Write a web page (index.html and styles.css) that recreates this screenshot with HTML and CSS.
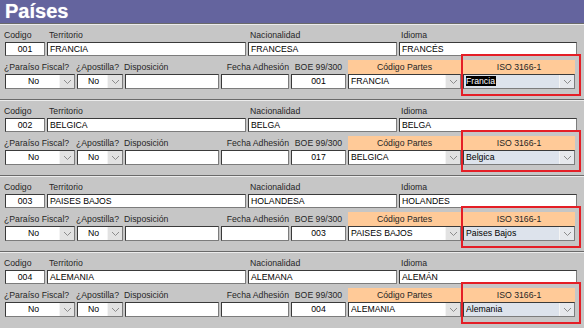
FILE: index.html
```html
<!DOCTYPE html>
<html lang="es">
  <head>
    <meta charset="UTF-8" />
    <meta name="viewport" content="width=device-width, initial-scale=1.0" />
    <title>Países</title>
    <link rel="stylesheet" href="styles.css">
  </head>
  <body>
    <header class="title-bar">Países</header>

    <div class="records">
      <!-- 001 -->
      <section class="record">
        <div class="row row-top">
          <div class="field"><span class="label">Codigo</span><div class="box center">001</div></div>
          <div class="field"><span class="label">Territorio</span><div class="box">FRANCIA</div></div>
          <div class="field"><span class="label">Nacionalidad</span><div class="box">FRANCESA</div></div>
          <div class="field"><span class="label">Idioma</span><div class="box">FRANCÉS</div></div>
        </div>
        <div class="row row-bottom">
          <div class="field"><span class="label">¿Paraíso Fiscal?</span><div class="box combo"><span class="combo__text center">No</span><span class="combo__arrow"><svg width="9" height="6" viewBox="0 0 9 6"><polyline points="1,1 4.5,4.5 8,1" /></svg></span></div></div>
          <div class="field"><span class="label">¿Apostilla?</span><div class="box combo"><span class="combo__text center">No</span><span class="combo__arrow"><svg width="9" height="6" viewBox="0 0 9 6"><polyline points="1,1 4.5,4.5 8,1" /></svg></span></div></div>
          <div class="field"><span class="label">Disposición</span><div class="box"></div></div>
          <div class="field"><span class="label right">Fecha Adhesión</span><div class="box"></div></div>
          <div class="field"><span class="label center">BOE 99/300</span><div class="box center">001</div></div>
          <div class="field"><span class="label head">Código Partes</span><div class="box combo"><span class="combo__text">FRANCIA</span><span class="combo__arrow"><svg width="9" height="6" viewBox="0 0 9 6"><polyline points="1,1 4.5,4.5 8,1" /></svg></span></div></div>
          <div class="field field--marked"><span class="label head">ISO 3166-1</span><div class="box combo combo--iso"><span class="combo__text"><span class="selected">Francia</span></span><span class="combo__arrow"><svg width="9" height="6" viewBox="0 0 9 6"><polyline points="1,1 4.5,4.5 8,1" /></svg></span></div></div>
        </div>
      </section>

      <!-- 002 -->
      <section class="record">
        <div class="row row-top">
          <div class="field"><span class="label">Codigo</span><div class="box center">002</div></div>
          <div class="field"><span class="label">Territorio</span><div class="box">BELGICA</div></div>
          <div class="field"><span class="label">Nacionalidad</span><div class="box">BELGA</div></div>
          <div class="field"><span class="label">Idioma</span><div class="box">BELGA</div></div>
        </div>
        <div class="row row-bottom">
          <div class="field"><span class="label">¿Paraíso Fiscal?</span><div class="box combo"><span class="combo__text center">No</span><span class="combo__arrow"><svg width="9" height="6" viewBox="0 0 9 6"><polyline points="1,1 4.5,4.5 8,1" /></svg></span></div></div>
          <div class="field"><span class="label">¿Apostilla?</span><div class="box combo"><span class="combo__text center">No</span><span class="combo__arrow"><svg width="9" height="6" viewBox="0 0 9 6"><polyline points="1,1 4.5,4.5 8,1" /></svg></span></div></div>
          <div class="field"><span class="label">Disposición</span><div class="box"></div></div>
          <div class="field"><span class="label right">Fecha Adhesión</span><div class="box"></div></div>
          <div class="field"><span class="label center">BOE 99/300</span><div class="box center">017</div></div>
          <div class="field"><span class="label head">Código Partes</span><div class="box combo"><span class="combo__text">BELGICA</span><span class="combo__arrow"><svg width="9" height="6" viewBox="0 0 9 6"><polyline points="1,1 4.5,4.5 8,1" /></svg></span></div></div>
          <div class="field field--marked"><span class="label head">ISO 3166-1</span><div class="box combo combo--iso"><span class="combo__text">Belgica</span><span class="combo__arrow"><svg width="9" height="6" viewBox="0 0 9 6"><polyline points="1,1 4.5,4.5 8,1" /></svg></span></div></div>
        </div>
      </section>

      <!-- 003 -->
      <section class="record">
        <div class="row row-top">
          <div class="field"><span class="label">Codigo</span><div class="box center">003</div></div>
          <div class="field"><span class="label">Territorio</span><div class="box">PAISES BAJOS</div></div>
          <div class="field"><span class="label">Nacionalidad</span><div class="box">HOLANDESA</div></div>
          <div class="field"><span class="label">Idioma</span><div class="box">HOLANDES</div></div>
        </div>
        <div class="row row-bottom">
          <div class="field"><span class="label">¿Paraíso Fiscal?</span><div class="box combo"><span class="combo__text center">No</span><span class="combo__arrow"><svg width="9" height="6" viewBox="0 0 9 6"><polyline points="1,1 4.5,4.5 8,1" /></svg></span></div></div>
          <div class="field"><span class="label">¿Apostilla?</span><div class="box combo"><span class="combo__text center">No</span><span class="combo__arrow"><svg width="9" height="6" viewBox="0 0 9 6"><polyline points="1,1 4.5,4.5 8,1" /></svg></span></div></div>
          <div class="field"><span class="label">Disposición</span><div class="box"></div></div>
          <div class="field"><span class="label right">Fecha Adhesión</span><div class="box"></div></div>
          <div class="field"><span class="label center">BOE 99/300</span><div class="box center">003</div></div>
          <div class="field"><span class="label head">Código Partes</span><div class="box combo"><span class="combo__text">PAISES BAJOS</span><span class="combo__arrow"><svg width="9" height="6" viewBox="0 0 9 6"><polyline points="1,1 4.5,4.5 8,1" /></svg></span></div></div>
          <div class="field field--marked"><span class="label head">ISO 3166-1</span><div class="box combo combo--iso"><span class="combo__text">Paises Bajos</span><span class="combo__arrow"><svg width="9" height="6" viewBox="0 0 9 6"><polyline points="1,1 4.5,4.5 8,1" /></svg></span></div></div>
        </div>
      </section>

      <!-- 004 -->
      <section class="record">
        <div class="row row-top">
          <div class="field"><span class="label">Codigo</span><div class="box center">004</div></div>
          <div class="field"><span class="label">Territorio</span><div class="box">ALEMANIA</div></div>
          <div class="field"><span class="label">Nacionalidad</span><div class="box">ALEMANA</div></div>
          <div class="field"><span class="label">Idioma</span><div class="box">ALEMÁN</div></div>
        </div>
        <div class="row row-bottom">
          <div class="field"><span class="label">¿Paraíso Fiscal?</span><div class="box combo"><span class="combo__text center">No</span><span class="combo__arrow"><svg width="9" height="6" viewBox="0 0 9 6"><polyline points="1,1 4.5,4.5 8,1" /></svg></span></div></div>
          <div class="field"><span class="label">¿Apostilla?</span><div class="box combo"><span class="combo__text center">No</span><span class="combo__arrow"><svg width="9" height="6" viewBox="0 0 9 6"><polyline points="1,1 4.5,4.5 8,1" /></svg></span></div></div>
          <div class="field"><span class="label">Disposición</span><div class="box"></div></div>
          <div class="field"><span class="label right">Fecha Adhesión</span><div class="box"></div></div>
          <div class="field"><span class="label center">BOE 99/300</span><div class="box center">004</div></div>
          <div class="field"><span class="label head">Código Partes</span><div class="box combo"><span class="combo__text">ALEMANIA</span><span class="combo__arrow"><svg width="9" height="6" viewBox="0 0 9 6"><polyline points="1,1 4.5,4.5 8,1" /></svg></span></div></div>
          <div class="field field--marked"><span class="label head">ISO 3166-1</span><div class="box combo combo--iso"><span class="combo__text">Alemania</span><span class="combo__arrow"><svg width="9" height="6" viewBox="0 0 9 6"><polyline points="1,1 4.5,4.5 8,1" /></svg></span></div></div>
        </div>
      </section>
    </div>
  </body>
</html>
```

FILE: styles.css
```css
body {
  margin: 0;
  padding: 0;
  background-color: #c6c6c6;
  font-family: "Liberation Sans", Arial, sans-serif;
  font-size: 8.7px;
  color: #1e1e1e;
  overflow: hidden;
}

.title-bar {
  height: 23px;
  box-sizing: border-box;
  padding-left: 5px;
  background-color: #64649e;
  color: #fff;
  font-size: 20px;
  font-weight: bold;
  line-height: 22px;
  text-shadow: 0 0 1px rgba(255, 255, 255, 0.6);
}

/* one block per country */
.record {
  height: 76px;
  box-sizing: border-box;
  border-top: 1px solid #6a6a6a;
  box-shadow: inset 0 1px 0 #ececec;
  padding-top: 5px;
}

.row {
  display: grid;
  column-gap: 2px;
  padding-left: 5px;
}

.row-top {
  grid-template-columns: 40px 199px 149px 178px;
}

.row-bottom {
  grid-template-columns: 70px 46px 94px 68px 55px 113px 112px;
  margin-top: 4px;
}

.field {
  display: flex;
  flex-direction: column;
  min-width: 0;
  position: relative;
}

.label {
  display: block;
  height: 13px;
  line-height: 13px;
  margin-left: -1px;
  white-space: nowrap;
  color: #262626;
}

.row-top .field + .field .label {
  margin-left: 0;
  padding-left: 2px;
}

.row-bottom .label {
  height: 14px;
  line-height: 14px;
}

.label.right {
  text-align: right;
  margin-left: 0;
}

.label.center {
  text-align: center;
  margin-left: 0;
}

.label.head {
  background-color: #ffca98;
  text-align: center;
  margin-left: 0;
}

.box {
  height: 14px;
  box-sizing: border-box;
  background-color: #fff;
  border: 1px solid #3a3a3a;
  border-right-color: #7c7c7c;
  border-bottom-color: #7c7c7c;
  padding: 0 2px;
  line-height: 12px;
  white-space: nowrap;
  overflow: hidden;
  color: #000;
}

.row-bottom .box {
  height: 15px;
  line-height: 13px;
}

.center {
  text-align: center;
}

.combo {
  display: flex;
  padding: 0 0 0 2px;
}

.combo__text {
  flex: 1;
  min-width: 0;
  overflow: hidden;
}

.combo__arrow {
  width: 14px;
  flex: none;
  display: flex;
  align-items: center;
  justify-content: center;
  background-color: #e2e2e2;
  border-left: 1px solid #f4f4f4;
}

.combo__arrow svg polyline {
  fill: none;
  stroke: #8c8c8c;
  stroke-width: 1;
}

.combo--iso {
  background-color: #dde3ec;
}

.combo--iso .combo__arrow {
  background-color: #e6e8ec;
}

.selected {
  background-color: #000;
  color: #fff;
  padding: 0 1px 0 0;
}

/* red highlight around the ISO column */
.field--marked::after {
  content: "";
  position: absolute;
  top: -6px;
  bottom: -7px;
  left: -2px;
  right: -6px;
  border: 2px solid #e41e26;
  pointer-events: none;
}
```
